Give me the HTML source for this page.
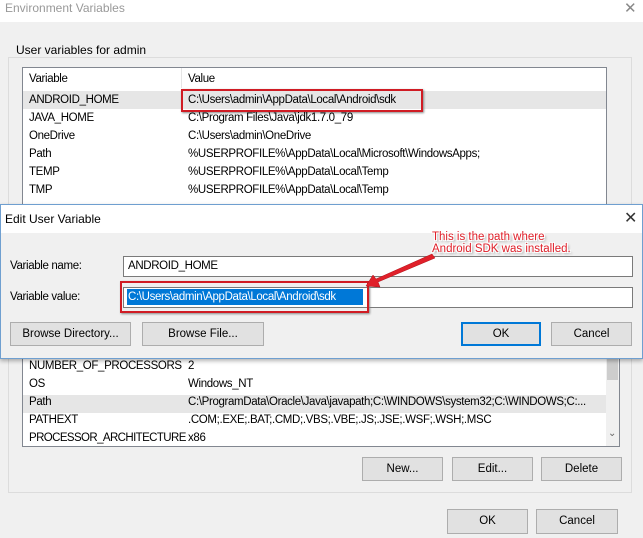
<!DOCTYPE html>
<html><head><style>
*{margin:0;padding:0;box-sizing:border-box}
body{width:643px;height:538px;background:#f0f0f0;font-family:"Liberation Sans",sans-serif;font-size:11.5px;color:#000;position:relative;overflow:hidden}
.a{position:absolute;white-space:nowrap}
.t{letter-spacing:-0.35px}
.btn{position:absolute;background:#e1e1e1;border:1px solid #adadad;text-align:center;line-height:22px}
.box{position:absolute;background:#fff;border:1px solid #828790}
</style></head><body>
<div class="a" style="left:0;top:0;width:643px;height:22px;background:#fff"></div>
<div class="a" style="left:5px;top:1px;color:#999;font-size:12px">Environment Variables</div>
<div class="a" style="left:624px;top:-1px;color:#888;font-size:15px">✕</div>
<div class="a" style="left:8px;top:57px;width:624px;height:436px;border:1px solid #dcdcdc"></div>
<div class="a" style="left:14px;top:43px;background:#f0f0f0;padding:0 2px;font-size:12px">User variables for admin</div>
<div class="box" style="left:22px;top:67px;width:585px;height:140px"></div>
<div class="a" style="left:181px;top:68px;width:1px;height:20px;background:#e5e5e5"></div>
<div class="a t" style="left:29px;top:73px">Variable</div>
<div class="a t" style="left:188px;top:73px">Value</div>
<div class="a" style="left:23px;top:91px;width:583px;height:18px;background:#e6e6e6"></div>
<div class="a t" style="left:29px;top:94px">ANDROID_HOME</div>
<div class="a t" style="left:188px;top:94px">C:\Users\admin\AppData\Local\Android\sdk</div>
<div class="a" style="left:181px;top:89px;width:242px;height:23px;border:2px solid #d01c24;box-shadow:1px 1px 2px #888"></div>
<div class="a t" style="left:29px;top:112px">JAVA_HOME</div><div class="a t" style="left:188px;top:112px">C:\Program Files\Java\jdk1.7.0_79</div>
<div class="a t" style="left:29px;top:130px">OneDrive</div><div class="a t" style="left:188px;top:130px">C:\Users\admin\OneDrive</div>
<div class="a t" style="left:29px;top:148px">Path</div><div class="a t" style="left:188px;top:148px">%USERPROFILE%\AppData\Local\Microsoft\WindowsApps;</div>
<div class="a t" style="left:29px;top:166px">TEMP</div><div class="a t" style="left:188px;top:166px">%USERPROFILE%\AppData\Local\Temp</div>
<div class="a t" style="left:29px;top:184px">TMP</div><div class="a t" style="left:188px;top:184px">%USERPROFILE%\AppData\Local\Temp</div>

<div class="box" style="left:22px;top:340px;width:598px;height:107px;border-top:none"></div>
<div class="a" style="left:606px;top:358px;width:13px;height:88px;background:#f0f0f0"></div>
<div class="a" style="left:607px;top:358px;width:11px;height:22px;background:#cdcdcd"></div>
<div class="a" style="left:608px;top:428px;font-size:10px;color:#666">⌄</div>
<div class="a" style="left:23px;top:395px;width:583px;height:18px;background:#e6e6e6"></div>
<div class="a t" style="left:29px;top:360px">NUMBER_OF_PROCESSORS</div><div class="a t" style="left:188px;top:360px">2</div>
<div class="a t" style="left:29px;top:378px">OS</div><div class="a t" style="left:188px;top:378px">Windows_NT</div>
<div class="a t" style="left:29px;top:396px">Path</div><div class="a t" style="left:188px;top:396px">C:\ProgramData\Oracle\Java\javapath;C:\WINDOWS\system32;C:\WINDOWS;C:...</div>
<div class="a t" style="left:29px;top:414px">PATHEXT</div><div class="a t" style="left:188px;top:414px">.COM;.EXE;.BAT;.CMD;.VBS;.VBE;.JS;.JSE;.WSF;.WSH;.MSC</div>
<div class="a t" style="left:29px;top:432px;letter-spacing:-0.6px">PROCESSOR_ARCHITECTURE</div><div class="a t" style="left:188px;top:432px">x86</div>
<div class="btn" style="left:362px;top:457px;width:81px;height:24px">New...</div>
<div class="btn" style="left:452px;top:457px;width:81px;height:24px">Edit...</div>
<div class="btn" style="left:541px;top:457px;width:81px;height:24px">Delete</div>
<div class="btn" style="left:447px;top:509px;width:81px;height:25px">OK</div>
<div class="btn" style="left:536px;top:509px;width:82px;height:25px">Cancel</div>

<div class="a" style="left:0;top:204px;width:643px;height:155px;background:#f0f0f0;border:1px solid #6f9fd0;box-shadow:0 2px 4px rgba(0,0,0,.3)"></div>
<div class="a" style="left:1px;top:205px;width:641px;height:28px;background:#fff"></div>
<div class="a" style="left:5px;top:212px;font-size:12px">Edit User Variable</div>
<div class="a" style="left:624px;top:208px;font-size:16px;color:#333">✕</div>
<div class="a t" style="left:10px;top:260px">Variable name:</div>
<div class="box" style="left:123px;top:256px;width:510px;height:21px;border-color:#7a7a7a"></div>
<div class="a t" style="left:128px;top:260px">ANDROID_HOME</div>
<div class="a t" style="left:10px;top:291px">Variable value:</div>
<div class="box" style="left:123px;top:287px;width:510px;height:21px;border-color:#7a7a7a"></div>
<div class="a" style="left:127px;top:289px;width:236px;height:16px;background:#0078d7"></div>
<div class="a t" style="left:128px;top:291px;color:#fff">C:\Users\admin\AppData\Local\Android\sdk</div>
<div class="a" style="left:120px;top:281px;width:249px;height:32px;border:2px solid #d01c24;box-shadow:1px 1px 2px #888"></div>
<div class="btn" style="left:10px;top:322px;width:121px;height:24px">Browse Directory...</div>
<div class="btn" style="left:142px;top:322px;width:122px;height:24px">Browse File...</div>
<div class="btn" style="left:461px;top:322px;width:80px;height:24px;border:2px solid #0078d7;line-height:20px">OK</div>
<div class="btn" style="left:551px;top:322px;width:81px;height:24px">Cancel</div>
<div class="a" style="left:432px;top:231px;color:#e0202a;font-size:11.5px;line-height:12px;text-shadow:1px 1px 0 #fff,-1px -1px 0 #fff,1px -1px 0 #fff,-1px 1px 0 #fff,2px 2px 2px #999">This is the path where<br>Android SDK was installed.</div>
<svg class="a" style="left:360px;top:250px" width="80" height="45"><polygon points="72,4 75,8 18,32 20,37 6,36 13,25 16,29" fill="#e0202a" stroke="#b01018" stroke-width="0.5"/></svg>
</body></html>
